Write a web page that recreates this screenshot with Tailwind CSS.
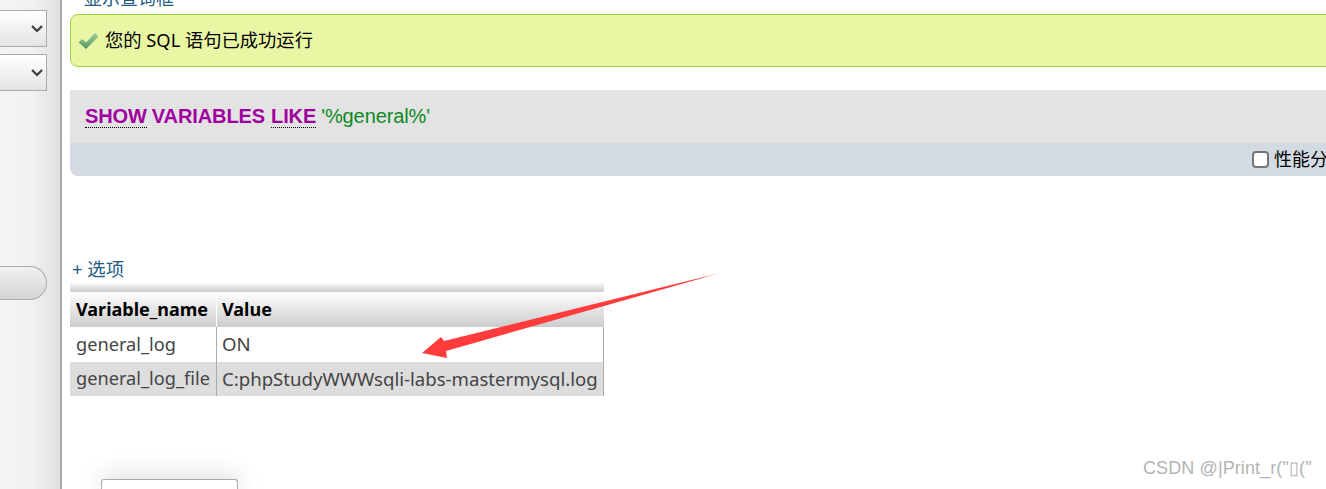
<!DOCTYPE html>
<html lang="zh-CN">
<head>
    <meta charset="UTF-8">
    <title>phpMyAdmin - SQL</title>
    <script src="https://cdn.jsdelivr.net/npm/@tailwindcss/browser@4"></script>
</head>
<body class="relative h-[489px] w-[1326px] overflow-hidden bg-white font-['Noto_Sans','Noto_Sans_CJK_SC',sans-serif] text-[18px] text-black">
    <div class="flex h-full">
        <!-- Sidebar -->
        <div class="flex h-full w-[62px] shrink-0 flex-col border-r-2 border-[#a9a9a9] bg-gradient-to-r from-[#f4f4f4] via-[#f2f2f2] to-[#dfe1e2] pt-[10px]">
            <div class="flex h-[37px] w-[47px] items-center justify-end border border-l-0 border-[#a9a9a9] bg-gradient-to-b from-white to-[#e4e4e4] pr-[2px]">
                <svg class="h-[10px] w-[14px]" viewBox="0 0 14 10" fill="none" stroke="#3c3c3c" stroke-width="2.2"><path d="M2 2l5 5 5-5"/></svg>
            </div>
            <div class="mt-[7px] flex h-[37px] w-[47px] items-center justify-end border border-l-0 border-[#a9a9a9] bg-gradient-to-b from-white to-[#e4e4e4] pr-[2px]">
                <svg class="h-[10px] w-[14px]" viewBox="0 0 14 10" fill="none" stroke="#3c3c3c" stroke-width="2.2"><path d="M2 2l5 5 5-5"/></svg>
            </div>
            <div class="mt-[175px] h-[34px] w-[47px] rounded-r-[17px] border border-l-0 border-[#aaaaaa] bg-gradient-to-b from-[#f1f1f1] to-[#d4d4d4]"></div>
        </div>

        <!-- Main -->
        <div class="flex-1 pl-2">
            <div class="-mt-[11px] h-[25px] pl-[14px] text-[18px] leading-[18px] text-[#235a81]">显示查询框</div>

            <div class="flex h-[53px] w-[1300px] items-center rounded-l-[8px] border border-[#a4d13e] bg-[#e9f7a5] pl-[7px]">
                <svg class="h-[18px] w-[21px]" viewBox="0 0 21 18"><defs><linearGradient id="chk" x1="0" y1="0" x2="0" y2="1"><stop offset="0" stop-color="#9fd09f"/><stop offset="1" stop-color="#4f9a5f"/></linearGradient></defs><path d="M0.5 10.5L4 7l4 3.5L17 1l3.500 3.500L8 17z" fill="url(#chk)"/></svg>
                <span class="ml-[6px] pb-[2px] text-[18.3px] leading-[24px] text-black">您的 SQL 语句已成功运行</span>
            </div>

            <div class="mt-[23px] w-[1300px] overflow-hidden rounded-bl-[8px]">
                <div class="flex h-[53px] items-center bg-[#e3e3e3] pb-[1px] pl-[15px] font-['Liberation_Sans',sans-serif] text-[20px] tracking-[-0.1px]">
                    <span class="border-b border-dotted border-black font-bold leading-[22px] text-[#a000a0]">SHOW</span>
                    <span class="ml-[5px] font-bold leading-[22px] text-[#a000a0]">VARIABLES</span>
                    <span class="ml-[6px] border-b border-dotted border-black font-bold leading-[22px] text-[#a000a0]">LIKE</span>
                    <span class="ml-[5px] leading-[22px] text-[#0b8a22]">'%general%'</span>
                </div>
                <div class="flex h-[33px] items-center bg-[#d3dae2] pb-[1px] pl-[1182px]">
                    <span class="h-[17px] w-[17px] rounded-[4px] border-2 border-[#767676] bg-white"></span>
                    <span class="ml-[5px] text-[18px] leading-[24px] text-black">性能分</span>
                </div>
            </div>

            <div class="mt-[81px] mb-[1px] pl-[2px] text-[18.4px] leading-[24px] text-[#235a81]">+ 选项</div>

            <div class="w-[534px] text-[18.2px]">
                <div class="h-[10px] bg-gradient-to-b from-white to-[#cccccc]"></div>
                <div class="flex h-[35px] items-center bg-gradient-to-b from-white to-[#cccccc] text-[18px] font-bold">
                    <div class="flex h-full w-[147px] items-center border-r border-white pl-[6px]">Variable_name</div>
                    <div class="pl-[5px]">Value</div>
                </div>
                <div class="flex h-[35px] items-center border-r border-[#aaaaaa] bg-white text-[#444444]">
                    <div class="flex h-full w-[147px] items-center border-r border-[#aaaaaa] pl-[6px]">general_log</div>
                    <div class="pb-[2px] pl-[5px] text-[18.6px]">ON</div>
                </div>
                <div class="flex h-[34px] items-center border-r border-[#aaaaaa] bg-[#dddddd] text-[#444444]">
                    <div class="flex h-full w-[147px] items-center border-r border-[#aaaaaa] pl-[6px]">general_log_file</div>
                    <div class="whitespace-nowrap pl-[5px] text-[18.6px]">C:phpStudyWWWsqli-labs-mastermysql.log</div>
                </div>
            </div>
        </div>
    </div>

    <!-- Popup peeking in at the bottom -->
    <div class="absolute left-[101px] top-[479px] h-[10px] w-[137px] rounded-t-[3px] border border-b-0 border-[#aaaaaa] bg-white shadow-[0_0_24px_rgba(0,0,0,0.25)]"></div>

    <!-- Red annotation arrow -->
    <svg class="absolute left-0 top-0" width="1326" height="489" viewBox="0 0 1326 489">
        <defs>
            <linearGradient id="tail" x1="600" y1="310" x2="721" y2="273" gradientUnits="userSpaceOnUse">
                <stop offset="0" stop-color="#ff3b3b"/>
                <stop offset="0.85" stop-color="#ff3b3b"/>
                <stop offset="1" stop-color="#ff3b3b" stop-opacity="0.25"/>
            </linearGradient>
        </defs>
        <path d="M422 353L441 337L444 341L722 272.500L446 351L447 358Z" fill="url(#tail)"/>
    </svg>

    <!-- Watermark -->
    <div class="absolute left-[1143px] top-[456px] whitespace-nowrap font-['Liberation_Sans',sans-serif] text-[18px] leading-[24px] tracking-[0.1px] text-[#b4b4b4]">CSDN @|Print_r("▯("</div>
</body>
</html>
